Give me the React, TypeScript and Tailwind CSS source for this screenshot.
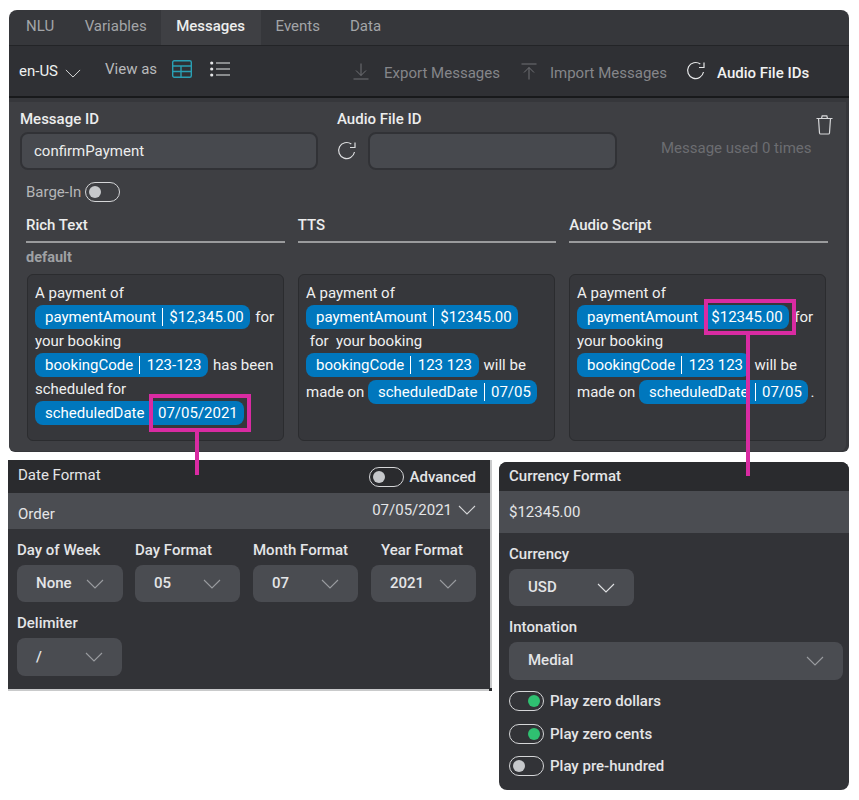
import React from 'react'

const Chevron = ({ className = 'w-[18px] h-[10px] text-[#a9abae]' }: { className?: string }) => (
  <svg viewBox="0 0 18 10" className={className} fill="none" stroke="currentColor" strokeWidth="1.1">
    <path d="M1 1l8 8 8-8" />
  </svg>
)

const RefreshIcon = ({ className }: { className: string }) => (
  <svg viewBox="0 0 20 20" className={className} fill="none" stroke="currentColor" strokeWidth="1.2">
    <path d="M17.5 11a8 8 0 1 1-3.2-8" />
    <path d="M18 1.5v5h-5" />
  </svg>
)

const Toggle = ({ on = false }: { on?: boolean }) => (
  <div className={`flex h-5 w-[35px] shrink-0 items-center rounded-full border border-[#d5d6d8] px-[3px] ${on ? 'justify-end' : 'justify-start'}`}>
    <div className={`h-3 w-3 rounded-full ${on ? 'bg-[#2fc071]' : 'bg-[#c6c8cb]'}`} />
  </div>
)

const Pill = ({ name, value, line = true }: { name: string; value: string; line?: boolean }) => (
  <span className="flex h-6 shrink-0 items-center rounded-lg bg-[#0077bd] pl-[10px] pr-[6.5px] text-white">
    <span>{name}</span>
    <span className={`mx-[6.25px] h-[18px] w-px ${line ? 'bg-white' : 'bg-transparent'}`} />
    <span>{value}</span>
  </span>
)

const Line = ({ children, className = '' }: { children: React.ReactNode; className?: string }) => (
  <div className={`flex h-6 items-center whitespace-pre ${className}`}>{children}</div>
)

const After = ({ children }: { children: React.ReactNode }) => <span className="ml-[5px]">{children}</span>

const Select = ({ value, width, height = 'h-[37px]', textClass = '-mt-px', chevronClass = 'text-[#9a9ca0]' }: { value: string; width: string; height?: string; textClass?: string; chevronClass?: string }) => (
  <div className={`flex items-center justify-between rounded-lg bg-[#4a4c51] pl-[19px] pr-[19px] font-medium text-[#e4e5e7] ${height} ${width}`}>
    <span className={textClass}>{value}</span>
    <Chevron className={`h-[10px] w-[18px] ${chevronClass}`} />
  </div>
)

export default function App() {
  return (
    <div className="relative h-[800px] w-[859px] overflow-hidden bg-white pl-[9px] pt-[10px] font-['Roboto',sans-serif] text-[15px] leading-5">
      {/* Top panel */}
      <div className="w-[840px] overflow-hidden rounded-t-lg rounded-b-md bg-[#36373b] pb-px">
        <div className="flex h-9 border-b border-[#232427] text-[#a3a5a8]">
          <div className="pl-[17px] pr-[16.5px] leading-[33px]">NLU</div>
          <div className="px-[14px] leading-[33px]">Variables</div>
          <div className="bg-[#3f4044] px-[15.5px] font-medium leading-[33px] text-[#eceded]">Messages</div>
          <div className="px-[15px] leading-[33px]">Events</div>
          <div className="px-[15px] leading-[33px]">Data</div>
        </div>
        <div className="flex h-[52px] items-center border-b-2 border-[#18191b] bg-[#2f3034] pl-[10px]">
          <span className="text-[#eef0f0]">en-US</span>
          <Chevron className="ml-[7px] mt-[4px] h-[9px] w-4 text-[#d9dadb]" />
          <span className="ml-[24px] -mt-[4px] text-[#b9babc]">View as</span>
          <svg viewBox="0 0 20 18" className="ml-[15px] -mt-[5px] h-[18px] w-5 text-[#2a9fb3]" fill="none" stroke="currentColor" strokeWidth="1.4">
            <rect x="0.7" y="0.7" width="18.6" height="16.6" rx="1.5" />
            <path d="M0.7 6h18.6M0.7 11.5h18.6M9 6v11.3" />
          </svg>
          <svg viewBox="0 0 20 16" className="ml-[18px] -mt-[5px] h-4 w-5 text-[#e6e7e8]" fill="currentColor">
            <circle cx="1.7" cy="2" r="1.6" />
            <circle cx="1.7" cy="8" r="1.6" />
            <circle cx="1.7" cy="14" r="1.6" />
            <path d="M6 1.5h14v1H6zM6 7.5h14v1H6zM6 13.5h14v1H6z" />
          </svg>
          <svg viewBox="0 0 16 17" className="ml-[123px] h-[17px] w-4 text-[#707175]" fill="none" stroke="currentColor" strokeWidth="1">
            <path d="M8 0.5v12M3 7.5l5 5 5-5M0.5 16h15" />
          </svg>
          <span className="ml-[15px] mt-[3px] text-[#85868a]">Export Messages</span>
          <svg viewBox="0 0 16 17" className="ml-[21px] h-[17px] w-4 text-[#707175]" fill="none" stroke="currentColor" strokeWidth="1">
            <path d="M8 16.5v-12M3 9.5l5-5 5 5M0.5 1h15" />
          </svg>
          <span className="ml-[13px] mt-[3px] text-[#85868a]">Import Messages</span>
          <RefreshIcon className="ml-[19px] h-5 w-5 text-[#e6e7e8]" />
          <span className="ml-[11px] mt-[3px] font-medium text-[#f1f2f2]">Audio File IDs</span>
        </div>
        <div className="mr-[3px] mt-[4px] flex h-[349px] flex-col rounded-b-md bg-[#3e3f43] px-[11px]">
          <div className="flex h-[78px] items-start">
            <div className="mr-[19px] w-[298px] pt-[7px]">
              <div className="font-medium leading-5 text-[#eceded]">Message ID</div>
              <div className="mt-[3px] flex h-[38px] items-center rounded-lg border-2 border-[#313236] bg-[#47494e] pl-3 text-[#eceded]">confirmPayment</div>
            </div>
            <div className="relative pt-[7px]">
              <div className="font-medium leading-5 text-[#eceded]">Audio File ID</div>
              <div className="mt-[3px] flex items-center">
                <RefreshIcon className="h-5 w-5 text-[#dcdddf]" />
                <div className="ml-[11px] h-[38px] w-[249px] rounded-lg border-2 border-[#313236] bg-[#47494e]" />
              </div>
            </div>
            <div className="ml-[44px] mt-[36px] whitespace-nowrap text-[#6c6d71]">Message used 0 times</div>
            <svg viewBox="0 0 17 20" className="ml-[4px] mt-[13px] h-5 w-[17px] text-[#d6d7d9]" fill="none" stroke="currentColor" strokeWidth="1.2">
              <path d="M0.5 3.5h16M2.5 3.5l1 14.5a1.2 1.2 0 0 0 1.2 1h7.6a1.2 1.2 0 0 0 1.2-1l1-14.5M5.5 3.5l.7-2.7h4.6l.7 2.7" />
            </svg>
          </div>
          <div className="mt-[2px] flex h-5 items-center pl-[6px] text-[#b5b6b8]">
            <span className="mr-[4px]">Barge-In</span>
            <Toggle />
          </div>
          <div className="mt-[13px] grid w-[808px] grid-cols-3 gap-x-[13px] pl-[6px] font-medium text-[#eceded]">
            {['Rich Text', 'TTS', 'Audio Script'].map((title) => (
              <div key={title} className="border-b-2 border-[#9a9b9d] pb-[6px]">{title}</div>
            ))}
          </div>
          <div className="mt-[5px] pl-[6px] text-[14.5px] font-bold leading-5 text-[#9fa1a4]">default</div>
          <div className="mt-[6px] grid w-[806px] grid-cols-3 gap-x-[14px] pl-[7px] text-[#eff0f0]">
            <div className="h-[167px] rounded-md border border-[#2b2c2f] bg-[#36373b] px-[7px] pt-[6px]">
              <Line>A payment of</Line>
              <Line><Pill name="paymentAmount" value="$12,345.00" /><After>for</After></Line>
              <Line>your booking</Line>
              <Line><Pill name="bookingCode" value="123-123" /><After>has been</After></Line>
              <Line>scheduled for</Line>
              <Line><Pill name="scheduledDate" value="07/05/2021" line={false} /></Line>
            </div>
            <div className="h-[167px] rounded-md border border-[#2b2c2f] bg-[#36373b] px-[7px] pt-[6px]">
              <Line>A payment of</Line>
              <Line><Pill name="paymentAmount" value="$12345.00" /></Line>
              <Line> for  your booking</Line>
              <Line><Pill name="bookingCode" value="123 123" /><After>will be</After></Line>
              <Line className="mt-[3px]">made on <Pill name="scheduledDate" value="07/05" /></Line>
            </div>
            <div className="h-[167px] rounded-md border border-[#2b2c2f] bg-[#36373b] px-[7px] pt-[6px]">
              <Line>A payment of</Line>
              <Line><Pill name="paymentAmount" value="$12345.00" line={false} /><After>for</After></Line>
              <Line>your booking</Line>
              <Line><Pill name="bookingCode" value="123 123" /><After>will be</After></Line>
              <Line className="mt-[3px]">made on <Pill name="scheduledDate" value="07/05" /><span className="ml-[2px]">.</span></Line>
            </div>
          </div>
        </div>
      </div>

      {/* Format panels */}
      <div className="-ml-px mt-[8px] flex items-start text-[#e4e5e7]">
        <div className="relative w-[484px] border-b-2 border-r-2 border-[#c9cacb] bg-[#323337]">
          <div className="flex h-[33px] justify-between bg-[#2a2b2e] pl-[10px] pr-[14px]">
            <span className="mt-[5px]">Date Format</span>
            <div className="mt-[7px] flex h-5 items-center gap-[6px]">
              <Toggle />
              <span className="font-medium">Advanced</span>
            </div>
          </div>
          <div className="flex h-9 justify-between bg-[#4b4d52] pl-[10px] pr-[14px]">
            <span className="mt-[11px]">Order</span>
            <div className="mt-[7px] flex h-5 items-center gap-[6px]">
              <span>07/05/2021</span>
              <Chevron className="h-[10px] w-[18px] text-[#d5d6d8]" />
            </div>
          </div>
          <div className="pl-[9px] pt-[11px]">
            <div className="flex gap-[12px]">
              <div className="w-[106px]"><div className="mb-[5px] font-medium">Day of Week</div><Select value="None" width="w-[106px]" /></div>
              <div className="w-[105px]"><div className="mb-[5px] font-medium">Day Format</div><Select value="05" width="w-[105px]" /></div>
              <div className="ml-px w-[105px]"><div className="mb-[5px] font-medium">Month Format</div><Select value="07" width="w-[105px]" /></div>
              <div className="ml-px w-[105px]"><div className="mb-[5px] pl-[10px] font-medium">Year Format</div><Select value="2021" width="w-[105px]" /></div>
            </div>
            <div className="mt-[11px] font-medium">Delimiter</div>
            <div className="mt-[5px] pb-[13px]"><Select value="/" width="w-[105px]" height="h-[38px]" /></div>
          </div>
          {/* resize handle corner */}
          <div className="absolute -bottom-[2px] -right-[2px] h-[3px] w-[3px] bg-[#2a2b2e]" />
        </div>
        <div className="ml-[7px] mt-[2px] w-[350px] overflow-hidden rounded-lg bg-[#323337]">
          <div className="flex h-[29px] items-center bg-[#2a2b2e] pl-[10px] font-medium"><span className="-mt-[2px]">Currency Format</span></div>
          <div className="flex h-[42px] items-center bg-[#4b4d52] pl-[10px]">$12345.00</div>
          <div className="px-[10px] pb-[14px] pt-[11px]">
            <div className="mb-[5px] font-medium">Currency</div>
            <Select value="USD" width="w-[125px]" chevronClass="text-[#e0e1e3]" />
            <div className="mb-[5px] mt-[11px] font-medium">Intonation</div>
            <div className="-mr-[4px]"><Select value="Medial" width="w-full" height="h-[38px]" textClass="-mt-[2px]" /></div>
            <div className="mt-[11px] flex items-center gap-[6px] font-medium"><Toggle on />Play zero dollars</div>
            <div className="mt-[13px] flex items-center gap-[6px] font-medium"><Toggle on />Play zero cents</div>
            <div className="mt-[12px] flex items-center gap-[6px] font-medium"><Toggle />Play pre-hundred</div>
          </div>
        </div>
      </div>

      {/* Callout markers laid over the screenshot */}
      <div className="absolute left-[149px] top-[394px] h-[38px] w-[102px] border-4 border-[#d92ba2]" />
      <div className="absolute left-[195px] top-[432px] h-[43px] w-1 bg-[#d92ba2]" />
      <div className="absolute left-[704px] top-[299px] h-[36px] w-[92px] border-4 border-[#d92ba2]" />
      <div className="absolute left-[746px] top-[335px] h-[141px] w-1 bg-[#d92ba2]" />
    </div>
  )
}
